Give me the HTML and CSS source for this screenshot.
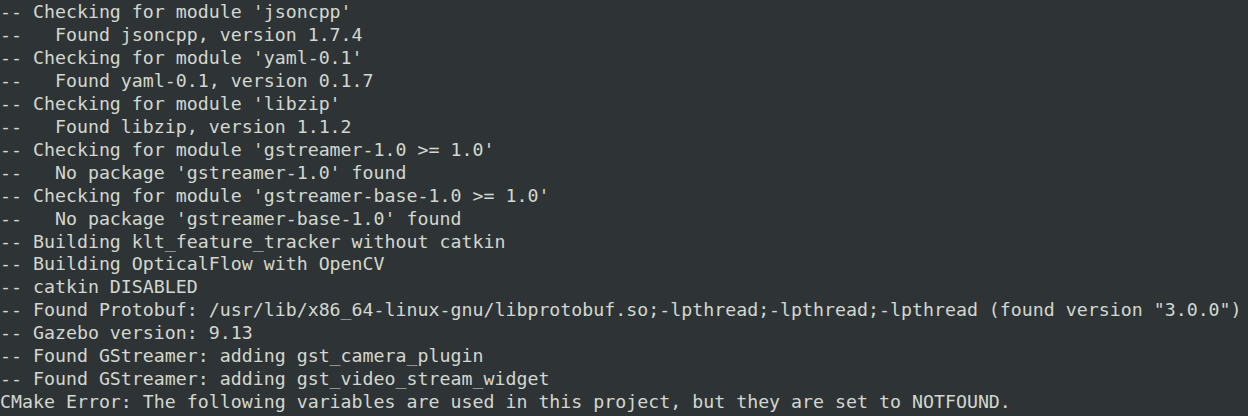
FILE: index.html
```html
<!DOCTYPE html>
<html>
<head>
<meta charset="utf-8">
<link rel="stylesheet" href="styles.css">
</head>
<body>
<pre class="term">-- Checking for module 'jsoncpp'
--   Found jsoncpp, version 1.7.4
-- Checking for module 'yaml-0.1'
--   Found yaml-0.1, version 0.1.7
-- Checking for module 'libzip'
--   Found libzip, version 1.1.2
-- Checking for module 'gstreamer-1.0 >= 1.0'
--   No package 'gstreamer-1.0' found
-- Checking for module 'gstreamer-base-1.0 >= 1.0'
--   No package 'gstreamer-base-1.0' found
-- Building klt_feature_tracker without catkin
-- Building OpticalFlow with OpenCV
-- catkin DISABLED
-- Found Protobuf: /usr/lib/x86_64-linux-gnu/libprotobuf.so;-lpthread;-lpthread;-lpthread (found version "3.0.0")
-- Gazebo version: 9.13
-- Found GStreamer: adding gst_camera_plugin
-- Found GStreamer: adding gst_video_stream_widget
CMake Error: The following variables are used in this project, but they are set to NOTFOUND.</pre>
</body>
</html>
```
FILE: styles.css
```css
html, body {
  margin: 0;
  padding: 0;
  background: #2e3436;
  width: 1248px;
  height: 416px;
  overflow: hidden;
}
.term {
  margin: 0;
  padding: 1px 0 0 0;
  font-family: "DejaVu Sans Mono", monospace;
  font-size: 18.25px;
  line-height: 22.95px;
  color: #d3d7cf;
  white-space: pre;
}
```
